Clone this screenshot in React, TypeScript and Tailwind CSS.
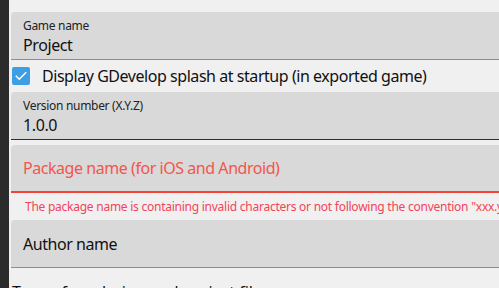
import React from 'react';

const font = { fontFamily: '"Noto Sans", "Open Sans", sans-serif' };

const FilledField = ({ label, value, borderClass }: { label: string; value: string; borderClass: string }) => (
  <div className={`shrink-0 h-[48px] bg-[#d9d9d9] rounded-t-[4px] border-b ${borderClass} pl-[12px] pt-[6px] flex flex-col`}>
    <span className="text-[12px] leading-[16px] text-[#222] tracking-[-0.3px]">{label}</span>
    <span className="text-[16px] leading-[22px] text-[#111] tracking-[-0.4px]">{value}</span>
  </div>
);

export default function App() {
  return (
    <div className="w-[499px] h-[288px] overflow-hidden flex bg-[#f0f0f0]" style={font}>
      <div className="w-[9px] shrink-0 bg-[#2b2b2b]" />
      <div className="flex-1 min-w-0 pl-[2px] pt-[12px] -mr-[40px] flex flex-col">
        <FilledField label="Game name" value="Project" borderClass="border-[#8c8c8c]" />

        <div className="shrink-0 h-[32px] flex items-center pl-[1px] gap-[12px]">
          <div className="w-[18px] h-[18px] rounded-[2px] bg-[#3d9ee4] flex items-center justify-center">
            <svg width="14" height="14" viewBox="0 0 24 24" fill="none" stroke="white" strokeWidth="2.6" strokeLinecap="square">
              <path d="M4 12.5l5 5L20 6.5" />
            </svg>
          </div>
          <span className="text-[16px] text-[#111] whitespace-nowrap tracking-[-0.45px]">Display GDevelop splash at startup (in exported game)</span>
        </div>

        <FilledField label="Version number (X.Y.Z)" value="1.0.0" borderClass="border-[#2e2e2e]" />

        <div className="shrink-0 mt-[5px] h-[48px] bg-[#d9d9d9] rounded-t-[4px] border-b-2 border-[#f44336] pl-[12px] flex items-center">
          <span className="text-[16px] text-[#f4554a] whitespace-nowrap tracking-[-0.45px]">Package name (for iOS and Android)</span>
        </div>
        <div className="shrink-0 h-[27px] flex items-center pl-[14px] overflow-hidden">
          <span className="text-[12px] text-[#f4435a] whitespace-nowrap tracking-[-0.25px]">
            The package name is containing invalid characters or not following the convention "xxx.yyy.zzz"
          </span>
        </div>

        <div className="shrink-0 h-[48px] bg-[#d9d9d9] rounded-t-[4px] border-b border-[#8c8c8c] pl-[12px] flex items-center">
          <span className="text-[16px] text-[#111] tracking-[-0.45px]">Author name</span>
        </div>

        <div className="shrink-0 pt-[14px] pl-[1px] text-[16px] text-[#111] whitespace-nowrap leading-[20px]">
          Type of rendering and project files
        </div>
      </div>
    </div>
  );
}
